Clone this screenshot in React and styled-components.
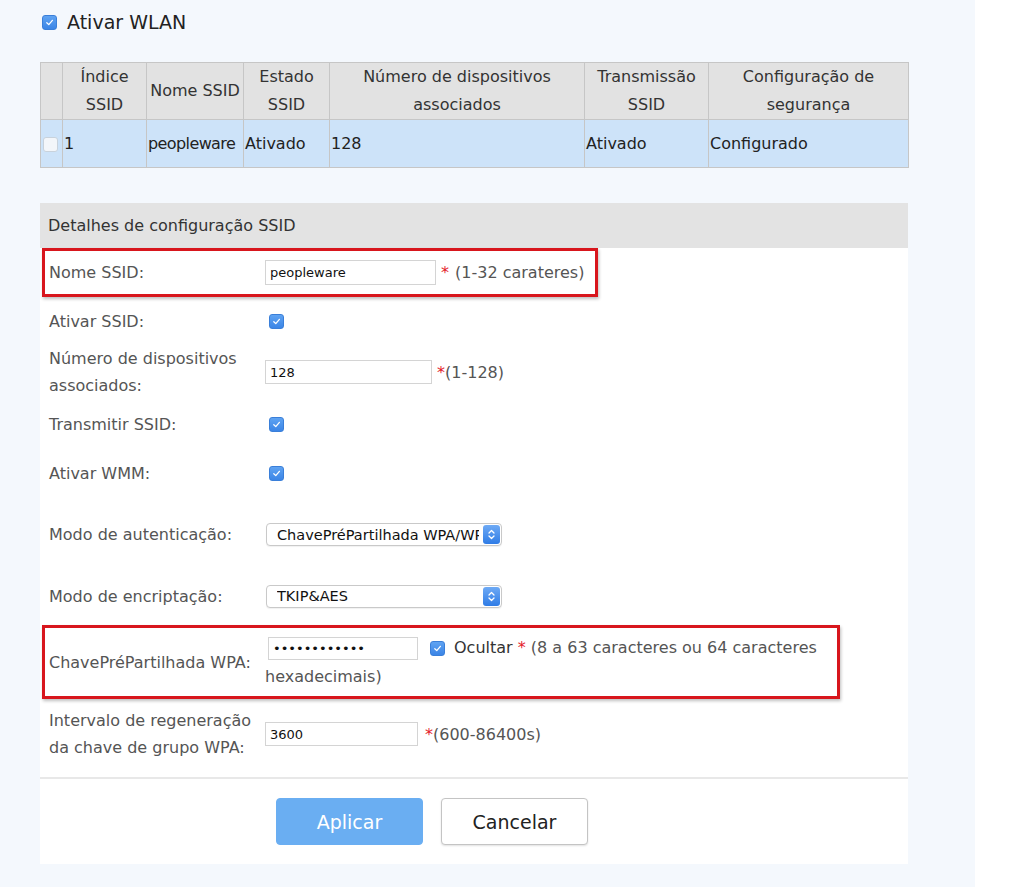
import React from 'react';
import styled, { createGlobalStyle } from 'styled-components';

const GlobalStyle = createGlobalStyle`
  body {
    margin: 0;
    background: #fff;
    font-family: "DejaVu Sans", "Noto Sans", sans-serif;
    color: #333;
  }
`;

const Page = styled.div`
  display: flex;
  min-height: 887px;
  background: #fff;
`;

const Main = styled.main`
  flex: 0 0 975px;
  box-sizing: border-box;
  background: #f4f8fd;
  padding: 10px 0 24px 40px;
`;

const WlanToggle = styled.label`
  display: flex;
  align-items: center;
  gap: 10px;
  height: 24px;
  padding-left: 2px;
  font-size: 19px;
  color: #222;
`;

const Box = styled.span`
  display: inline-flex;
  align-items: center;
  justify-content: center;
  flex: none;
  width: 15px;
  height: 15px;
  box-sizing: border-box;
  border-radius: 3px;
  vertical-align: middle;
  background: ${(p) => (p.$checked ? 'linear-gradient(#5fa3f2, #3b85e6)' : '#f3f6fa')};
  border: 1px solid ${(p) => (p.$checked ? '#3a7fd9' : '#c8d2dc')};
  margin-left: ${(p) => p.$ml || 0}px;
`;

const Checkbox = ({ checked, ml }) => (
  <Box $checked={checked} $ml={ml}>
    {checked && (
      <svg width="9" height="9" viewBox="0 0 10 10">
        <path d="M2 5.3 L4.2 7.4 L8.2 2.6" fill="none" stroke="#fff" strokeWidth="1.4" strokeLinecap="round" strokeLinejoin="round" />
      </svg>
    )}
  </Box>
);

const Table = styled.table`
  margin-top: 28px;
  width: 868px;
  table-layout: fixed;
  border-collapse: collapse;
  border: 1px solid #c6c6c6;
  font-size: 16px;
`;

const Th = styled.th`
  height: 55px;
  padding: 0;
  background: #e2e2e2;
  border: 1px solid #c6c6c6;
  font-weight: normal;
  color: #333;
  line-height: 28px;
  text-align: center;
`;

const Td = styled.td`
  height: 47px;
  padding: 0 0 0 1px;
  background: #cde3f9;
  border-left: 1px solid #c6c6c6;
  color: #222;
  white-space: nowrap;
  letter-spacing: ${(p) => (p.$tight ? '-0.6px' : '0')};
`;

const Panel = styled.section`
  margin-top: 35px;
  width: 868px;
  background: #fff;
`;

const PanelHeader = styled.div`
  display: flex;
  align-items: center;
  height: 45px;
  padding-left: 8px;
  background: #e3e3e3;
  font-size: 16px;
  color: #333;
`;

const Row = styled.div`
  display: flex;
  align-items: center;
  box-sizing: border-box;
  min-height: ${(p) => p.$h}px;
  margin-top: ${(p) => p.$mt || 0}px;
  padding-left: ${(p) => (p.$highlight ? 4 : 9)}px;
  ${(p) =>
    p.$highlight &&
    `
    width: ${p.$highlight}px;
    margin-left: 2px;
    border: 3px solid #d8161d;
    box-shadow: 1px 2px 3px rgba(0, 0, 0, 0.25);
  `}
`;

const Label = styled.div`
  flex: 0 0 216px;
  font-size: 16px;
  line-height: 27px;
  color: #555;
  white-space: ${(p) => (p.$nowrap ? 'nowrap' : 'normal')};
`;

const Control = styled.div`
  display: flex;
  align-items: center;
`;

const FlowControl = styled.div`
  flex: 1;
  font-size: 16px;
  line-height: 29px;
  color: #555;
  padding-right: 2px;
`;

const Input = styled.input`
  box-sizing: border-box;
  width: ${(p) => p.$w}px;
  height: ${(p) => p.$hgt || 24}px;
  margin-left: ${(p) => p.$ml || 0}px;
  padding: 0 4px;
  border: 1px solid #d4d4d4;
  background: #fff;
  font-family: "DejaVu Sans", sans-serif;
  font-size: 13px;
  color: #111;
  vertical-align: middle;
  outline: none;
`;

const Hint = styled.span`
  margin-left: ${(p) => p.$ml || 0}px;
  font-size: 16px;
  color: #555;
`;

const Star = styled.span`
  color: #e4212b;
  margin-right: ${(p) => p.$mr || 0}px;
`;

const SelectBox = styled.div`
  display: flex;
  align-items: center;
  box-sizing: border-box;
  width: 236px;
  height: 23px;
  margin-left: 1px;
  padding: 0 1px 0 10px;
  border: 1px solid #c9c9c9;
  border-radius: 4px;
  background: #fff;
  box-shadow: 0 1px 1px rgba(0, 0, 0, 0.06);
  font-size: 14.5px;
  color: #111;
`;

const SelectText = styled.span`
  flex: 1;
  overflow: hidden;
  white-space: nowrap;
`;

const Stepper = styled.span`
  display: flex;
  align-items: center;
  justify-content: center;
  flex: none;
  width: 17px;
  height: 19px;
  margin-left: 4px;
  border-radius: 3px;
  background: linear-gradient(#6eaaf5, #2f7ce6);
`;

const Select = ({ value }) => (
  <SelectBox>
    <SelectText>{value}</SelectText>
    <Stepper>
      <svg width="9" height="13" viewBox="0 0 9 13">
        <path d="M2 5 L4.5 2.5 L7 5 M2 8 L4.5 10.5 L7 8" fill="none" stroke="#fff" strokeWidth="1.3" strokeLinecap="round" strokeLinejoin="round" />
      </svg>
    </Stepper>
  </SelectBox>
);

const OcultarText = styled.span`
  margin-left: 9px;
  color: #333;
`;

const Footer = styled.div`
  display: flex;
  gap: 18px;
  margin-top: 8px;
  padding: 19px 0 19px 236px;
  border-top: 2px solid #e8e8e8;
`;

const Button = styled.button`
  width: 147px;
  height: 47px;
  border-radius: 4px;
  font-family: "DejaVu Sans", sans-serif;
  font-size: 19px;
  cursor: pointer;
  background: ${(p) => (p.$primary ? '#6aaef2' : '#fff')};
  color: ${(p) => (p.$primary ? '#fff' : '#222')};
  border: 1px solid ${(p) => (p.$primary ? '#6aaef2' : '#c4c4c4')};
  box-shadow: ${(p) => (p.$primary ? 'none' : '0 1px 2px rgba(0,0,0,0.12)')};
`;

const Side = styled.div`
  flex: 1;
  background: #fff;
`;

const columns = [
  { title: '', width: 22 },
  { title: 'Índice SSID', width: 84 },
  { title: 'Nome SSID', width: 97 },
  { title: 'Estado SSID', width: 86 },
  { title: 'Número de dispositivos associados', width: 255 },
  { title: 'Transmissão SSID', width: 124 },
  { title: 'Configuração de segurança', width: 200 },
];

export default function App() {
  return (
    <>
      <GlobalStyle />
      <Page>
        <Main>
          <WlanToggle>
            <Checkbox checked />
            Ativar WLAN
          </WlanToggle>

          <Table>
            <colgroup>
              {columns.map((c, i) => (
                <col key={i} style={{ width: c.width }} />
              ))}
            </colgroup>
            <thead>
              <tr>
                {columns.map((c, i) => (
                  <Th key={i}>{c.title}</Th>
                ))}
              </tr>
            </thead>
            <tbody>
              <tr>
                <Td>
                  <Checkbox ml={1} />
                </Td>
                <Td>1</Td>
                <Td $tight>peopleware</Td>
                <Td>Ativado</Td>
                <Td>128</Td>
                <Td>Ativado</Td>
                <Td>Configurado</Td>
              </tr>
            </tbody>
          </Table>

          <Panel>
            <PanelHeader>Detalhes de configuração SSID</PanelHeader>

            <Row $h={49} $highlight={556}>
              <Label>Nome SSID:</Label>
              <Control>
                <Input $w={171} $hgt={25} readOnly value="peopleware" />
                <Hint $ml={5}>
                  <Star $mr={6}>*</Star>(1-32 carateres)
                </Hint>
              </Control>
            </Row>

            <Row $h={48}>
              <Label>Ativar SSID:</Label>
              <Checkbox checked ml={4} />
            </Row>

            <Row $h={53}>
              <Label>Número de dispositivos associados:</Label>
              <Control>
                <Input $w={167} readOnly value="128" />
                <Hint $ml={5}>
                  <Star>*</Star>(1-128)
                </Hint>
              </Control>
            </Row>

            <Row $h={50}>
              <Label>Transmitir SSID:</Label>
              <Checkbox checked ml={4} />
            </Row>

            <Row $h={48}>
              <Label>Ativar WMM:</Label>
              <Checkbox checked ml={4} />
            </Row>

            <Row $h={75}>
              <Label>Modo de autenticação:</Label>
              <Select value="ChavePréPartilhada WPA/WPA2" />
            </Row>

            <Row $h={48}>
              <Label>Modo de encriptação:</Label>
              <Select value="TKIP&AES" />
            </Row>

            <Row $h={74} $mt={5} $highlight={798}>
              <Label $nowrap>ChavePréPartilhada WPA:</Label>
              <FlowControl>
                <Input $w={150} $hgt={23} $ml={3} readOnly value="••••••••••••" />
                <Checkbox checked ml={12} />
                <OcultarText>Ocultar</OcultarText> <Star>*</Star> (8 a 63 caracteres ou 64 caracteres hexadecimais)
              </FlowControl>
            </Row>

            <Row $h={70}>
              <Label>Intervalo de regeneração da chave de grupo WPA:</Label>
              <Control>
                <Input $w={153} readOnly value="3600" />
                <Hint $ml={7}>
                  <Star>*</Star>(600-86400s)
                </Hint>
              </Control>
            </Row>

            <Footer>
              <Button $primary>Aplicar</Button>
              <Button>Cancelar</Button>
            </Footer>
          </Panel>
        </Main>
        <Side />
      </Page>
    </>
  );
}
